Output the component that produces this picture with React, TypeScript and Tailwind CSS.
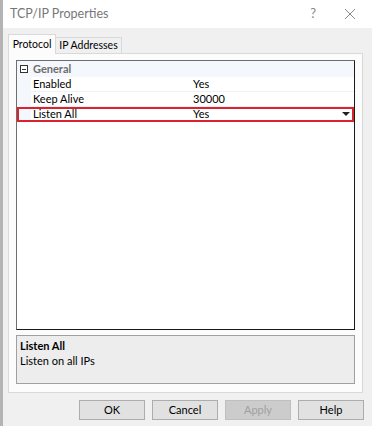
import React from 'react'

// PropertyGrid rows under the "General" category
const ROWS = [
  { name: 'Enabled', value: 'Yes' },
  { name: 'Keep Alive', value: '30000' },
  { name: 'Listen All', value: 'Yes', selected: true },
]

const BUTTONS = [
  { label: 'OK' },
  { label: 'Cancel' },
  { label: 'Apply', disabled: true },
  { label: 'Help' },
]

export default function App() {
  return (
    <div
      className="flex h-[426px] w-[372px] flex-col overflow-hidden border-l-[3px] border-[#b4b4b4] bg-[#f0f0f0] text-[11px] text-black"
      style={{ fontFamily: 'Lato, "Open Sans", sans-serif' }}
    >
      {/* title bar */}
      <div className="flex h-[28px] shrink-0 items-center bg-white pl-[7px]">
        <span className="flex-1 text-[12.5px] text-[#777]">TCP/IP Properties</span>
        <span className="mr-[28px] text-[13px] text-[#888]">?</span>
        <svg width="12" height="12" viewBox="0 0 12 12" className="mr-[16px]">
          <path d="M1 1 L11 11 M11 1 L1 11" stroke="#888" strokeWidth="1" />
        </svg>
      </div>

      {/* tabs */}
      <div className="ml-[5px] mt-[6px] flex h-[19px] shrink-0 items-end text-[10.5px]">
        <div className="relative z-10 -mb-px flex h-[20px] w-[48px] items-center justify-center border border-b-0 border-[#d9d9d9] bg-[#fcfcfc]">
          Protocol
        </div>
        <div className="flex h-[16px] w-[66px] items-center justify-center border-r border-t border-[#d9d9d9] bg-[#f0f0f0]">
          IP Addresses
        </div>
      </div>

      {/* tab panel */}
      <div className="ml-[5px] mr-[9px] flex h-[340px] shrink-0 flex-col border border-[#d9d9d9] bg-[#fcfcfc] px-[7px] pb-[7px] pt-[6px]">
        {/* property grid */}
        <div className="flex h-[270px] flex-col border border-b-[#1a1a1a] border-l-[#6e6e6e] border-r-[#1a1a1a] border-t-[#6e6e6e] bg-white">
          <div className="flex h-[16px] items-center bg-[#f4f7fc]">
            <div className="flex w-[14px] justify-center">
              <div className="flex h-[8px] w-[8px] items-center justify-center border border-[#333] bg-white">
                <div className="h-px w-[4px] bg-[#333]" />
              </div>
            </div>
            <span className="pl-[2px] font-bold text-[#6d6d6d]">General</span>
          </div>
          {ROWS.map((row) => (
            <div
              key={row.name}
              className={
                row.selected
                  ? 'flex h-[15px] outline-2 -outline-offset-2 outline-[#d9232e]'
                  : 'flex h-[15px]'
              }
            >
              <div className="w-[14px] shrink-0 bg-[#f4f7fc]" />
              <div className="flex flex-1 items-center border-b border-[#eef1f6]">
                <span className="w-[160px] shrink-0 pl-[2px]">{row.name}</span>
                <span className="flex-1 pl-[2px]">{row.value}</span>
                {row.selected && (
                  <svg width="8" height="4" viewBox="0 0 8 4" className="mr-[4px]">
                    <path d="M0 0 H8 L4 4 Z" fill="#222" />
                  </svg>
                )}
              </div>
            </div>
          ))}
          <div className="flex-1" />
        </div>

        {/* description */}
        <div className="mt-[5px] flex h-[49px] flex-col border border-[#a0a0a0] bg-[#ededed] px-[3px] pt-[2px]">
          <span className="font-bold leading-[15px]">Listen All</span>
          <span className="leading-[15px]">Listen on all IPs</span>
        </div>
      </div>

      {/* dialog buttons */}
      <div className="mr-[8px] mt-[7px] flex justify-end gap-[7px]">
        {BUTTONS.map((b) => (
          <div
            key={b.label}
            className={
              b.disabled
                ? 'flex h-[20px] w-[66px] items-center justify-center border border-[#bfbfbf] bg-[#cccccc] text-[#a0a0a0]'
                : 'flex h-[20px] w-[66px] items-center justify-center border border-[#adadad] bg-[#e1e1e1]'
            }
          >
            {b.label}
          </div>
        ))}
      </div>
    </div>
  )
}
